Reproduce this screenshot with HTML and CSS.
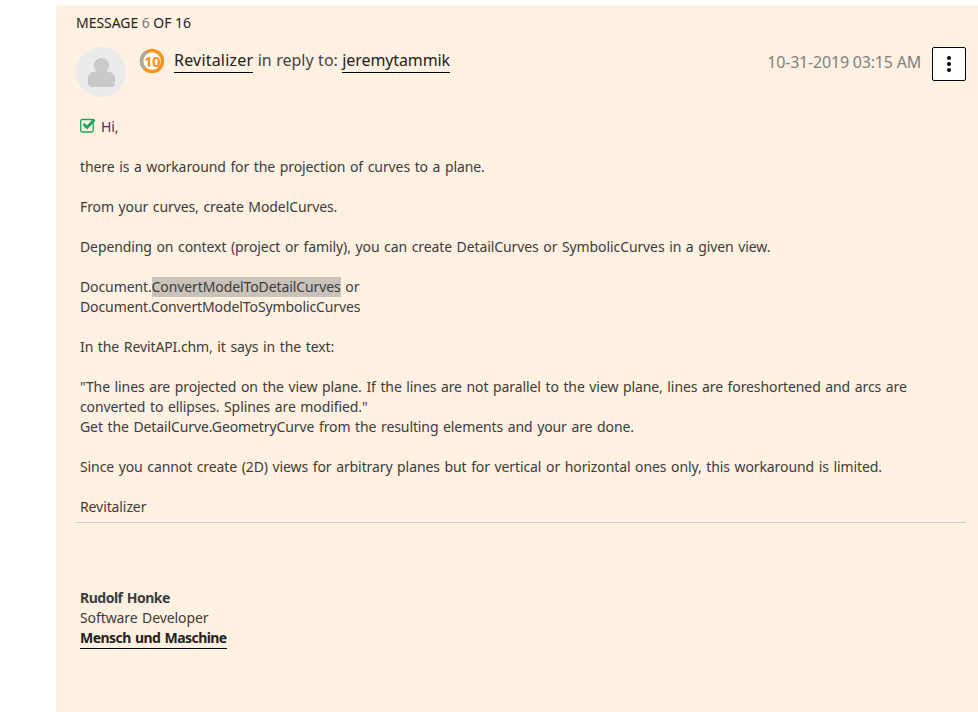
FILE: index.html
```html
<!DOCTYPE html>
<html lang="en">
<head>
<meta charset="UTF-8" />
<title>Message 6 of 16</title>
<link rel="stylesheet" href="styles.css">
</head>
<body>

<div class="message">
  <div class="counter">MESSAGE <span class="counter-num">6</span> OF 16</div>

  <div class="head">
    <div class="avatar">
      <svg width="27" height="29" viewBox="0 0 27 29">
        <circle cx="13.5" cy="7.5" r="7.5" fill="#c9c9c9"/>
        <path d="M0 25 V20 C0 16 4 13.5 8 13.5 H19 C23 13.5 27 16 27 20 V25 C27 27.5 25.5 29 23 29 H4 C1.500 29 0 27.500 0 25 Z" fill="#c9c9c9"/>
      </svg>
    </div>
    <div class="rank">
      <svg width="26" height="26" viewBox="0 0 26 26">
        <circle cx="13" cy="13" r="10.5" fill="#fff" stroke="#f7941d" stroke-width="3.400"/>
        <path d="M5.6 20.4 A10.5 10.5 0 0 1 8 3.800" fill="none" stroke="#a9a9a9" stroke-width="3.400"/>
        <text class="rank-num" x="13" y="18.500" text-anchor="middle">10</text>
      </svg>
    </div>
    <div class="byline"><a class="link author" href="#">Revitalizer</a> in reply to: <a class="link parent" href="#">jeremytammik</a></div>
    <div class="date">10-31-2019 03:15 AM</div>
    <button class="menu-btn" aria-label="Options">
      <svg width="4" height="16" viewBox="0 0 4 16">
        <circle cx="2" cy="2" r="2"/>
        <circle cx="2" cy="8" r="2"/>
        <circle cx="2" cy="14" r="2"/>
      </svg>
    </button>
  </div>

  <div class="body">
    <p class="hi">
      <svg class="check" width="16" height="16" viewBox="0 0 16 16">
        <rect x="0.700" y="2.500" width="12.500" height="12.500" rx="1.500" fill="none" stroke="#1fa35f" stroke-width="1.300"/>
        <path d="M3.500 7 L7 10.500 L14.500 2.500" fill="none" stroke="#1fa35f" stroke-width="2.800"/>
      </svg>
      <span class="hi-text">Hi,</span>
    </p>
    <p class="gap">there is a workaround for the projection of curves to a plane.</p>
    <p class="gap">From your curves, create ModelCurves.</p>
    <p class="gap">Depending on context (project or family), you can create DetailCurves or SymbolicCurves in a given view.</p>
    <p class="gap">Document.<span class="selected">ConvertModelToDetailCurves</span> or<br>Document.ConvertModelToSymbolicCurves</p>
    <p class="gap">In the RevitAPI.chm, it says in the text:</p>
    <p class="gap">"The lines are projected on the view plane. If the lines are not parallel to the view plane, lines are foreshortened and arcs are converted to ellipses. Splines are modified."<br>Get the DetailCurve.GeometryCurve from the resulting elements and your are done.</p>
    <p class="gap">Since you cannot create (2D) views for arbitrary planes but for vertical or horizontal ones only, this workaround is limited.</p>
    <p class="gap">Revitalizer</p>
  </div>

  <div class="signature">
    <div class="sig-name">Rudolf Honke</div>
    <div>Software Developer</div>
    <a class="link sig-company" href="#">Mensch und Maschine</a>
  </div>
</div>

</body>
</html>
```

FILE: styles.css
```css
body {
  margin: 0;
  background: white;
  font-family: "Noto Sans", Arial, sans-serif;
  color: #3c3c3c;
  height: 712px;
  overflow: hidden;
}
.message {
  margin: 5px 0 0 56px;
  height: 707px;
  box-sizing: border-box;
  padding: 9px 12px 0 20px;
  background: #fef1e1;
  border-radius: 4px 0 0 0;
  font-size: 14px;
  line-height: 20px;
  letter-spacing: -0.1px;
  word-spacing: 1.1px;
}
.counter {
  font-size: 14px;
  line-height: 18px;
  letter-spacing: -0.05px;
  word-spacing: 0;
  color: #222;
}
.counter-num {
  color: #777;
}
.head {
  display: flex;
  align-items: flex-start;
  margin-top: 15px;
}
.avatar {
  width: 50px;
  height: 50px;
  border-radius: 50%;
  background: #ebebeb;
  display: flex;
  align-items: center;
  justify-content: center;
}
.rank {
  margin: 1px 0 0 13px;
  height: 26px;
}
.rank-num {
  font-size: 15px;
  font-weight: bold;
  letter-spacing: -0.5px;
  word-spacing: 0;
  fill: #f7941d;
}
.byline {
  margin: 2px 0 0 9px;
  font-size: 16px;
  line-height: 22px;
  letter-spacing: 0;
  word-spacing: 0.3px;
  color: #444;
}
.link {
  color: #222;
  text-decoration: none;
  border-bottom: 1px solid black;
  padding-bottom: 1px;
}
.author {
  letter-spacing: 0.2px;
}
.parent {
  letter-spacing: -0.1px;
}
.date {
  margin: 4px 0 0 auto;
  font-size: 16px;
  line-height: 22px;
  letter-spacing: -0.2px;
  word-spacing: 0;
  color: #808080;
}
.menu-btn {
  width: 34px;
  height: 34px;
  margin-left: 11px;
  background: white;
  border: 1px solid black;
  border-radius: 2px;
  padding: 0;
  display: flex;
  align-items: center;
  justify-content: center;
}
.body {
  margin-top: 20px;
  padding: 0 0 5px 4px;
  border-bottom: 1px solid #c8cad0;
}
.body p {
  margin: 0;
}
.body .gap {
  margin-top: 20px;
}
.hi {
  display: flex;
  align-items: center;
  gap: 5px;
}
.check {
  margin-top: -4px;
}
.hi-text {
  color: #5f1f55;
}
.selected {
  display: inline-block;
  height: 20px;
  background: #c8c2ba;
}
.signature {
  margin-top: 65px;
  padding-left: 4px;
}
.sig-name {
  font-weight: bold;
  letter-spacing: -0.5px;
}
.sig-company {
  font-weight: bold;
  letter-spacing: -0.55px;
}
```
